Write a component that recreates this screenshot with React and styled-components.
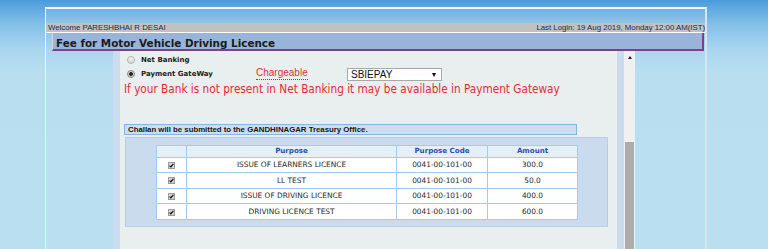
import React from 'react';
import styled, { createGlobalStyle } from 'styled-components';

const GlobalStyle = createGlobalStyle`
  html, body { margin: 0; padding: 0; height: 100%; }
  body {
    background: linear-gradient(to bottom, #4a9cdb 0px, #7fbde6 22px, #a8d5ef 48px, #b9def0 72px, #badff0 100%);
    overflow: hidden;
  }
  #root { height: 100%; }
`;

const Page = styled.div`
  height: 100%;
  box-sizing: border-box;
  padding: 7px 0 0 45px;
`;

const Frame = styled.div`
  width: 662px;
  height: 100%;
  box-sizing: border-box;
  border-top: 2px solid #f2f7fb;
  border-left: 1px solid #eef4f8;
  border-right: 2px solid #dde4e8;
  display: flex;
  flex-direction: column;
`;

const TopSpace = styled.div`
  height: 14px;
  background: rgba(255, 255, 255, 0.1);
`;

const InfoBar = styled.div`
  height: 9px;
  background: #c1c1c1;
  border-bottom: 1px solid #ffffff;
  display: flex;
  justify-content: space-between;
  align-items: center;
  padding-left: 2px;
  font-family: 'Liberation Sans', Arial, sans-serif;
  font-size: 7.8px;
  line-height: 9px;
  color: #1e2b55;
  white-space: nowrap;
`;

const TitleBar = styled.div`
  height: 12px;
  margin: 0 1px 0 6px;
  padding: 4px 0 0 3px;
  background: #98b4d8;
  border-left: 1px solid #d3dbe4;
  border-right: 2px solid #7e3d8d;
  border-bottom: 2px solid #7e3d8d;
  font-family: 'DejaVu Sans', Verdana, sans-serif;
  font-weight: bold;
  font-size: 10.4px;
  line-height: 12px;
  color: #1b1b1b;
  white-space: nowrap;
`;

const ContentRow = styled.div`
  flex: 1;
  min-height: 0;
  display: flex;
`;

const SideGap = styled.div`
  width: 67px;
  flex: none;
`;

const Panel = styled.div`
  width: 497px;
  flex: none;
  padding: 0 7px;
  background: #cadcee;
  display: flex;
`;

const Content = styled.div`
  flex: 1;
  background: #e9eeee;
  padding: 2px 4px 0;
  overflow: hidden;
`;

const Scrollbar = styled.div`
  width: 11px;
  flex: none;
  background: #f0f0f0;
  display: flex;
  flex-direction: column;
  align-items: center;
  overflow: hidden;
`;

const ScrollArrow = styled.div`
  margin-top: 5px;
  width: 0;
  height: 0;
  border-left: 2.5px solid transparent;
  border-right: 2.5px solid transparent;
  border-bottom: 3px solid #222;
`;

const ScrollThumb = styled.div`
  margin-top: 83px;
  width: 9px;
  height: 300px;
  background: #adadad;
`;

const OptionRow = styled.div`
  height: 14px;
  display: flex;
  align-items: center;
`;

const OptionCell = styled.div`
  width: 129px;
  padding-left: 3px;
  display: flex;
  align-items: center;
`;

const Radio = styled.span`
  width: 6px;
  height: 6px;
  border-radius: 50%;
  border: 1px solid ${p => (p.$checked ? '#8a8a8a' : '#b4b4b4')};
  background: ${p =>
    p.$checked
      ? 'radial-gradient(circle, #2b2b2b 0 1.6px, #cfcfcf 2.2px)'
      : 'linear-gradient(#f2f2f2, #d9d9d9)'};
  margin-right: 6px;
  flex: none;
`;

const OptionLabel = styled.span`
  font-family: 'DejaVu Sans', Verdana, sans-serif;
  font-weight: bold;
  font-size: 7px;
  color: #222;
  white-space: nowrap;
`;

const ChargeCell = styled.div`
  width: 91px;
  display: flex;
  align-items: center;
`;

const Chargeable = styled.span`
  font-family: 'Liberation Sans', Arial, sans-serif;
  font-size: 10px;
  line-height: 10px;
  color: #e53434;
  border-bottom: 1px dotted #555;
  padding-bottom: 1px;
`;

const SelectBox = styled.div`
  width: 90px;
  height: 11px;
  border: 1px solid #a8a8a8;
  background: #fff;
  padding-left: 3px;
  display: flex;
  align-items: center;
  justify-content: space-between;
  font-family: 'Liberation Sans', Arial, sans-serif;
  font-size: 10px;
  color: #111;
  margin-top: 1px;
`;

const SelectArrow = styled.span`
  width: 0;
  height: 0;
  margin-right: 5px;
  border-left: 2px solid transparent;
  border-right: 2px solid transparent;
  border-top: 4px solid #111;
`;

const Notice = styled.div`
  font-family: 'DejaVu Sans Condensed', 'DejaVu Sans', sans-serif;
  font-stretch: condensed;
  font-size: 11.7px;
  line-height: 16px;
  color: #f02a2c;
  white-space: nowrap;
`;

const ChallanBox = styled.div`
  margin-top: 27px;
  width: 448px;
  height: 9px;
  border: 1px solid #80b6ea;
  background: #cfdcec;
  padding-left: 3px;
  font-family: 'Liberation Sans', Arial, sans-serif;
  font-weight: bold;
  font-size: 7.8px;
  line-height: 9px;
  color: #161616;
  white-space: nowrap;
`;

const TablePanel = styled.div`
  margin: 2px 0 0 1px;
  width: 421px;
  padding: 7px 30px 6px;
  background: #cbdbee;
  border: 1px solid #bccee3;
`;

const FeeTable = styled.table`
  width: 421px;
  border-collapse: collapse;
  table-layout: fixed;
  font-family: 'DejaVu Sans', Verdana, sans-serif;
`;

const HeadCell = styled.th`
  height: 10.5px;
  padding: 0;
  border: 1px solid #a4caee;
  background: #e6eef8;
  font-size: 7.1px;
  font-weight: bold;
  color: #2450c2;
  text-align: center;
  line-height: 10px;
`;

const Cell = styled.td`
  height: 14.6px;
  padding: 0;
  border: 1px solid #a4caee;
  background: #ffffff;
  font-size: 7.4px;
  color: #2a2a2a;
  text-align: center;
  white-space: nowrap;
`;

const CheckWrap = styled.span`
  display: inline-block;
  vertical-align: middle;
  width: 7px;
  height: 7px;
`;

const Check = () => (
  <CheckWrap>
    <svg width="7" height="7" viewBox="0 0 7 7">
      <rect x="0.5" y="0.5" width="6" height="6" fill="#d9d9d9" stroke="#9a9a9a" />
      <path d="M1.6 3.6 L2.9 4.9 L5.4 1.8" fill="none" stroke="#111" strokeWidth="1.3" />
    </svg>
  </CheckWrap>
);

const rows = [
  ['ISSUE OF LEARNERS LICENCE', '0041-00-101-00', '300.0'],
  ['LL TEST', '0041-00-101-00', '50.0'],
  ['ISSUE OF DRIVING LICENCE', '0041-00-101-00', '400.0'],
  ['DRIVING LICENCE TEST', '0041-00-101-00', '600.0'],
];

export default function App() {
  return (
    <>
      <GlobalStyle />
      <Page>
        <Frame>
          <TopSpace />
          <InfoBar>
            <span>Welcome PARESHBHAI R DESAI</span>
            <span>Last Login: 19 Aug 2019, Monday 12:00 AM(IST)</span>
          </InfoBar>
          <TitleBar>Fee for Motor Vehicle Driving Licence</TitleBar>
          <ContentRow>
            <SideGap />
            <Panel>
              <Content>
                <OptionRow>
                  <OptionCell>
                    <Radio />
                    <OptionLabel>Net Banking</OptionLabel>
                  </OptionCell>
                </OptionRow>
                <OptionRow>
                  <OptionCell>
                    <Radio $checked />
                    <OptionLabel>Payment GateWay</OptionLabel>
                  </OptionCell>
                  <ChargeCell>
                    <Chargeable>Chargeable</Chargeable>
                  </ChargeCell>
                  <SelectBox>
                    SBIEPAY
                    <SelectArrow />
                  </SelectBox>
                </OptionRow>
                <Notice>If your Bank is not present in Net Banking it may be available in Payment Gateway</Notice>
                <ChallanBox>Challan will be submitted to the GANDHINAGAR Treasury Office.</ChallanBox>
                <TablePanel>
                  <FeeTable>
                    <colgroup>
                      <col style={{ width: 30 }} />
                      <col style={{ width: 210 }} />
                      <col style={{ width: 91 }} />
                      <col style={{ width: 90 }} />
                    </colgroup>
                    <thead>
                      <tr>
                        <HeadCell />
                        <HeadCell>Purpose</HeadCell>
                        <HeadCell>Purpose Code</HeadCell>
                        <HeadCell>Amount</HeadCell>
                      </tr>
                    </thead>
                    <tbody>
                      {rows.map(r => (
                        <tr key={r[0]}>
                          <Cell><Check /></Cell>
                          <Cell>{r[0]}</Cell>
                          <Cell>{r[1]}</Cell>
                          <Cell>{r[2]}</Cell>
                        </tr>
                      ))}
                    </tbody>
                  </FeeTable>
                </TablePanel>
              </Content>
            </Panel>
            <Scrollbar>
              <ScrollArrow />
              <ScrollThumb />
            </Scrollbar>
          </ContentRow>
        </Frame>
      </Page>
    </>
  );
}
